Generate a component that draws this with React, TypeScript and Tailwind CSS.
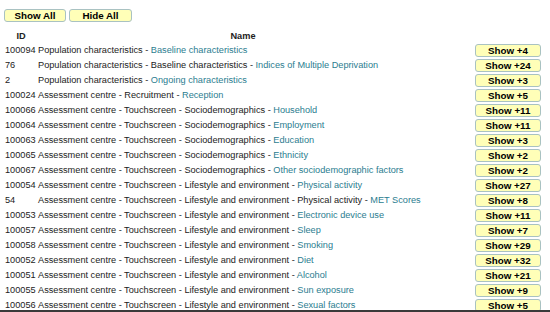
import React from "react";

type Row = { id: string; path: string; link: string; count: number };

const rows: Row[] = [
  { id: "100094", path: "Population characteristics", link: "Baseline characteristics", count: 4 },
  { id: "76", path: "Population characteristics - Baseline characteristics", link: "Indices of Multiple Deprivation", count: 24 },
  { id: "2", path: "Population characteristics", link: "Ongoing characteristics", count: 3 },
  { id: "100024", path: "Assessment centre - Recruitment", link: "Reception", count: 5 },
  { id: "100066", path: "Assessment centre - Touchscreen - Sociodemographics", link: "Household", count: 11 },
  { id: "100064", path: "Assessment centre - Touchscreen - Sociodemographics", link: "Employment", count: 11 },
  { id: "100063", path: "Assessment centre - Touchscreen - Sociodemographics", link: "Education", count: 3 },
  { id: "100065", path: "Assessment centre - Touchscreen - Sociodemographics", link: "Ethnicity", count: 2 },
  { id: "100067", path: "Assessment centre - Touchscreen - Sociodemographics", link: "Other sociodemographic factors", count: 2 },
  { id: "100054", path: "Assessment centre - Touchscreen - Lifestyle and environment", link: "Physical activity", count: 27 },
  { id: "54", path: "Assessment centre - Touchscreen - Lifestyle and environment - Physical activity", link: "MET Scores", count: 8 },
  { id: "100053", path: "Assessment centre - Touchscreen - Lifestyle and environment", link: "Electronic device use", count: 11 },
  { id: "100057", path: "Assessment centre - Touchscreen - Lifestyle and environment", link: "Sleep", count: 7 },
  { id: "100058", path: "Assessment centre - Touchscreen - Lifestyle and environment", link: "Smoking", count: 29 },
  { id: "100052", path: "Assessment centre - Touchscreen - Lifestyle and environment", link: "Diet", count: 32 },
  { id: "100051", path: "Assessment centre - Touchscreen - Lifestyle and environment", link: "Alcohol", count: 21 },
  { id: "100055", path: "Assessment centre - Touchscreen - Lifestyle and environment", link: "Sun exposure", count: 9 },
  { id: "100056", path: "Assessment centre - Touchscreen - Lifestyle and environment", link: "Sexual factors", count: 5 },
];

const btn =
  "box-border h-[13px] p-0 rounded-[3px] border border-[#a9c2c2] bg-[#ffffb8] text-[9.8px] leading-[11px] font-bold text-black";

export default function App() {
  return (
    <div className="flex h-[312px] flex-col overflow-hidden bg-white font-['Liberation_Sans',Arial,sans-serif] text-[9.2px] text-[#222]">
      <div className="flex-1 overflow-hidden">
        {/* Top controls */}
        <div className="flex gap-[3px] pl-[4px] pt-[9px]">
          <button className={`${btn} w-[62px]`}>Show All</button>
          <button className={`${btn} w-[63px]`}>Hide All</button>
        </div>

        <table className="mt-[8px] ml-[4px] w-[546px] table-fixed border-collapse">
          <thead>
            <tr className="h-[13px]">
              <th className="w-[34px] p-0 text-center font-bold leading-none">ID</th>
              <th className="w-[410px] p-0 text-center font-bold leading-none">Name</th>
              <th className="w-[102px] p-0"></th>
            </tr>
          </thead>
          <tbody>
            {rows.map((r) => (
              <tr key={r.id + r.link} className="h-[15px]">
                <td className="p-0 pl-[1px] leading-none whitespace-nowrap">{r.id}</td>
                <td className="p-0 leading-none whitespace-nowrap">
                  {r.path} - <a className="text-[#2b7d8f]">{r.link}</a>
                </td>
                <td className="p-0 pr-[9px] text-right leading-none">
                  <button className={`${btn} w-[66px] align-middle`}>Show +{r.count}</button>
                </td>
              </tr>
            ))}
          </tbody>
        </table>
      </div>
      <div className="h-[2px] bg-[#3a3a3a]"></div>
    </div>
  );
}
